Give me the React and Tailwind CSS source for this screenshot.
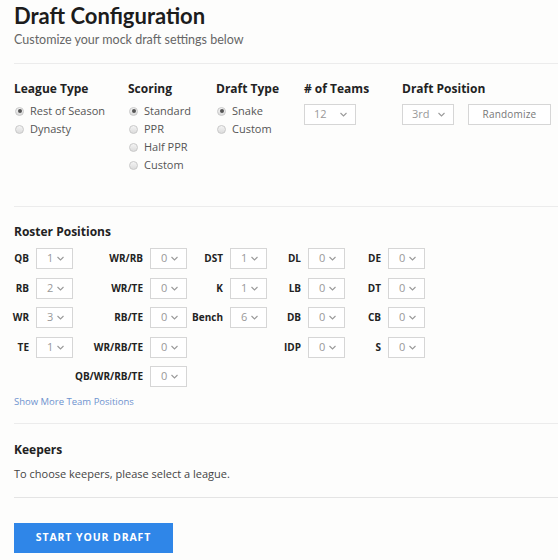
import React, { useState } from "react";

const Chevron = () => (
  <svg width="7" height="5" viewBox="0 0 7 5" className="shrink-0">
    <polyline points="0.5,1 3.5,4 6.5,1" fill="none" stroke="#9a9a9a" strokeWidth="1.1" />
  </svg>
);

const Radio = ({ label, checked, onClick }) => (
  <label className="flex items-center h-[18px] cursor-pointer" onClick={onClick}>
    <span className="w-[9px] h-[9px] rounded-full border border-[#c8c8c8] bg-gradient-to-b from-[#f4f4f4] to-[#dcdcdc] flex items-center justify-center mr-[6px] ml-[1px]">
      {checked && <span className="w-[4px] h-[4px] rounded-full bg-[#555]" />}
    </span>
    <span className="text-[11px] text-[#555]">{label}</span>
  </label>
);

const RadioGroup = ({ title, options, width }) => {
  const [value, setValue] = useState(options[0]);
  return (
    <div className={width}>
      <h3 className="text-[12px] leading-[18px] font-bold text-[#222] mb-[4px]">{title}</h3>
      {options.map((o) => (
        <Radio key={o} label={o} checked={value === o} onClick={() => setValue(o)} />
      ))}
    </div>
  );
};

const Select = ({ value, className = "" }) => (
  <div className={`shrink-0 h-[21px] border border-[#d6d6d6] bg-white flex items-center justify-between text-[11px] text-[#999] ${className}`}>
    <span>{value}</span>
    <Chevron />
  </div>
);

// roster grid: [label, value] per cell, null for an empty cell
const roster = [
  [["QB", 1], ["WR/RB", 0], ["DST", 1], ["DL", 0], ["DE", 0]],
  [["RB", 2], ["WR/TE", 0], ["K", 1], ["LB", 0], ["DT", 0]],
  [["WR", 3], ["RB/TE", 0], ["Bench", 6], ["DB", 0], ["CB", 0]],
  [["TE", 1], ["WR/RB/TE", 0], null, ["IDP", 0], ["S", 0]],
  [null, ["QB/WR/RB/TE", 0], null, null, null],
];

const App = () => {
  return (
    <div className="w-[558px] h-[560px] bg-[#fdfdfc] overflow-hidden" style={{ fontFamily: "'Open Sans', sans-serif" }}>
      <div className="pl-[14px] pt-[2px]">
        <h1 className="text-[22px] leading-[28px] font-bold text-[#1c1c1c]" style={{ fontFamily: "Lato, sans-serif" }}>
          Draft Configuration
        </h1>
        <p className="text-[12.5px] leading-[18px] text-[#666] mt-[1px]" style={{ fontFamily: "Lato, sans-serif" }}>
          Customize your mock draft settings below
        </p>
      </div>

      <div className="ml-[14px] mt-[14px] border-t border-[#ececec]" />

      <div className="pl-[14px] mt-[16px] flex">
        <RadioGroup title="League Type" options={["Rest of Season", "Dynasty"]} width="w-[114px]" />
        <RadioGroup title="Scoring" options={["Standard", "PPR", "Half PPR", "Custom"]} width="w-[88px]" />
        <RadioGroup title="Draft Type" options={["Snake", "Custom"]} width="w-[88px]" />
        <div className="w-[98px]">
          <h3 className="text-[12px] leading-[18px] font-bold text-[#222] mb-[6px]"># of Teams</h3>
          <Select value="12" className="w-[52px] pl-[9px] pr-[8px]" />
        </div>
        <div>
          <h3 className="text-[12px] leading-[18px] font-bold text-[#222] mb-[6px]">Draft Position</h3>
          <div className="flex gap-[14px]">
            <Select value="3rd" className="w-[52px] pl-[9px] pr-[8px]" />
            <button className="h-[21px] w-[83px] border border-[#d6d6d6] bg-white text-[10px] tracking-[0.2px] text-[#777]">
              Randomize
            </button>
          </div>
        </div>
      </div>

      <div className="ml-[14px] mt-[32px] border-t border-[#ececec]" />

      <div className="pl-[14px] mt-[16px]">
        <h3 className="text-[12px] leading-[18px] font-bold text-[#222]">Roster Positions</h3>
        <div className="grid grid-cols-[59px_114px_80px_78px_80px] gap-y-[8.5px] mt-[7px]">
          {roster.flat().map((cell, i) =>
            cell ? (
              <div key={i} className="flex items-center justify-end gap-[7px] h-[21px]">
                <span className="text-[10px] font-bold text-[#222]">{cell[0]}</span>
                <Select value={cell[1]} className="w-[37px] pl-[10px] pr-[8px]" />
              </div>
            ) : (
              <div key={i} />
            )
          )}
        </div>
        <a href="#" className="block mt-[7px] text-[9.5px] leading-[16px] text-[#6f93cf]">
          Show More Team Positions
        </a>
      </div>

      <div className="ml-[14px] mt-[13px] border-t border-[#ececec]" />

      <div className="pl-[14px] mt-[17px]">
        <h3 className="text-[12px] leading-[18px] font-bold text-[#222]">Keepers</h3>
        <p className="mt-[6px] text-[11px] leading-[18px] text-[#444]">To choose keepers, please select a league.</p>
      </div>

      <div className="ml-[14px] mt-[14px] border-t border-[#e4e4e4]" />

      <div className="pl-[14px] mt-[25px]">
        <button className="w-[159px] h-[30px] bg-[#2f86e8] text-white text-[10.5px] font-bold tracking-[0.9px]">
          START YOUR DRAFT
        </button>
      </div>
    </div>
  );
};

export default App;
